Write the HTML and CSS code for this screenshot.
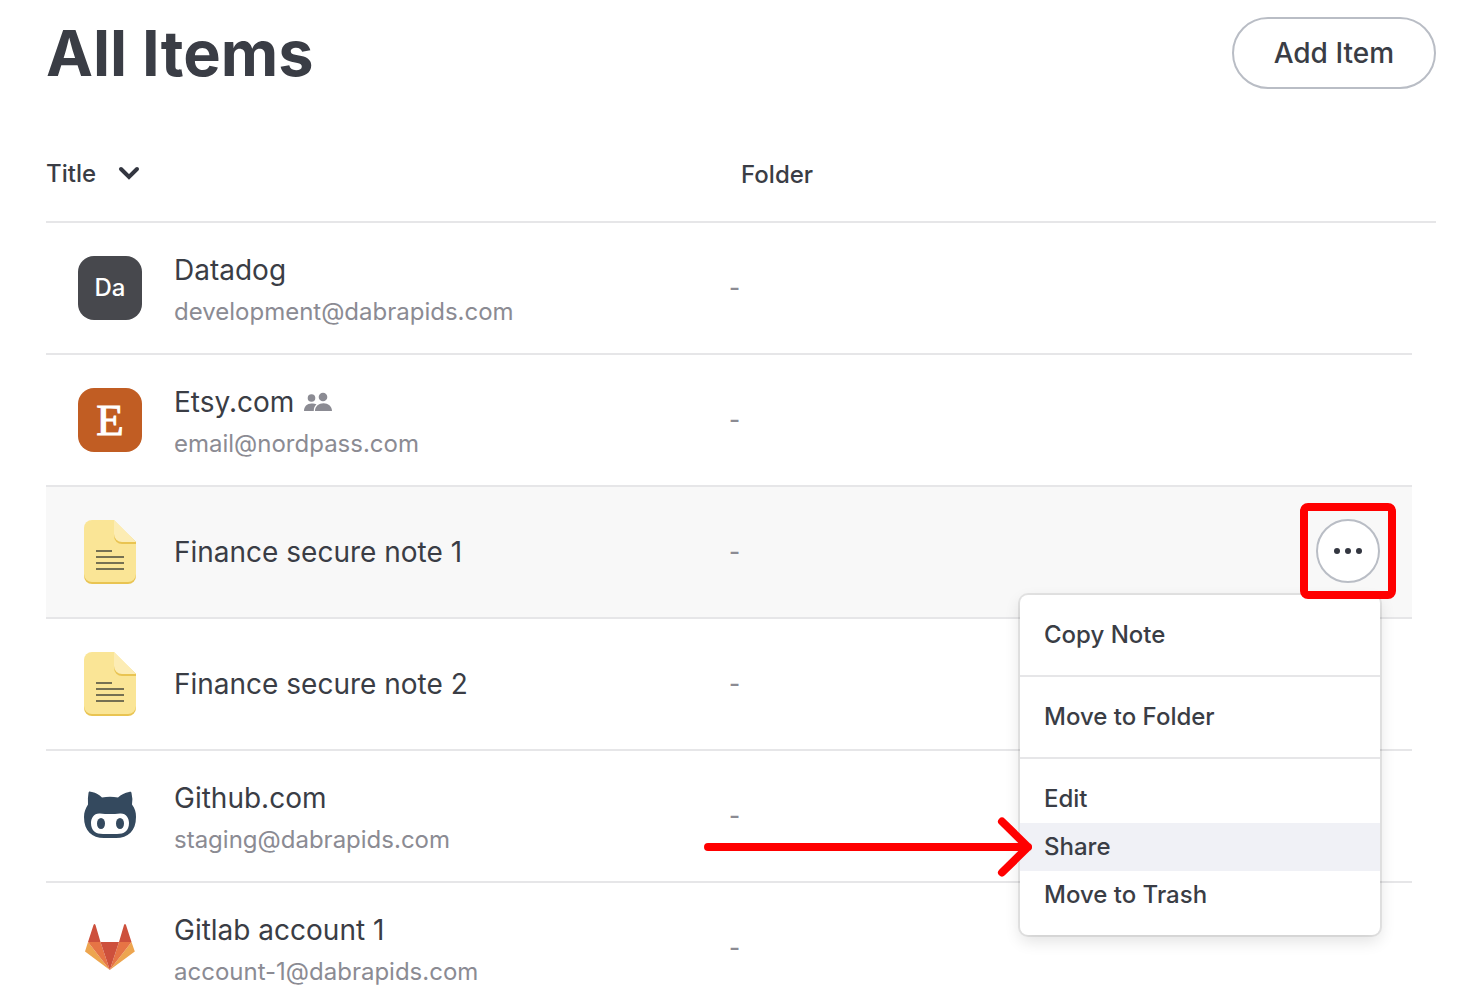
FILE: index.html
```html
<!DOCTYPE html>
<html lang="en">
<head>
<meta charset="utf-8">
<meta name="viewport" content="width=device-width, initial-scale=1">
<title>All Items</title>
<link rel="stylesheet" href="styles.css">
</head>
<body>
<svg class="sprite" aria-hidden="true">
  <symbol id="note" viewBox="0 0 64 64">
    <path fill="#e9c452" d="M14 2H36L58 24V56a8 8 0 0 1-8 8H14a8 8 0 0 1-8-8V10Z"/>
    <path fill="#fae596" d="M14 0H36L58 22V54a8 8 0 0 1-8 8H14a8 8 0 0 1-8-8V8A8 8 0 0 1 14 0Z"/>
    <path fill="#e9c452" d="M36 2V16a8 8 0 0 0 8 8H58V22Z"/>
    <path fill="#fcecb4" d="M36 0V14a8 8 0 0 0 8 8H58Z"/>
    <path fill="none" stroke="#757052" stroke-width="2" d="M18 31H34M18 37H46M18 43H46M18 49H46"/>
  </symbol>
</svg>
<main class="page">
  <header class="page-header">
    <h1 class="page-title">All Items</h1>
    <button class="add-button" type="button">Add Item</button>
  </header>
  <table class="items">
    <colgroup>
      <col class="col-title"><col class="col-folder"><col class="col-actions"><col class="col-gutter">
    </colgroup>
    <thead>
      <tr>
        <th scope="col"><button class="sort-button" type="button">Title
          <svg width="22" height="14" viewBox="0 0 22 14" aria-hidden="true"><path fill="none" stroke="#333640" stroke-width="4" stroke-linecap="round" d="M3 3L11 11L19 3"/></svg></button></th>
        <th class="folder-heading" scope="col">Folder</th>
        <td colspan="2"></td>
      </tr>
    </thead>
    <tbody>
      <tr>
        <td><div class="item">
          <span class="item-icon badge badge-dark">Da</span>
          <div><div class="item-name">Datadog</div><div class="item-user">development@dabrapids.com</div></div>
        </div></td>
        <td class="folder">-</td><td></td>
      </tr>
      <tr>
        <td><div class="item">
          <span class="item-icon badge badge-etsy">E</span>
          <div><div class="item-name">Etsy.com
            <svg width="28" height="20" viewBox="0 0 28 20" role="img" aria-label="Shared"><g fill="#8b8b93"><circle cx="7.500" cy="6" r="3.800"/><circle cx="19" cy="5" r="4.300"/><path d="M0 19c0-4.500 3-7.500 7.500-7.500 2 0 3.800.3 5 1-2 1.500-2.700 3.500-2.700 6.500ZM11 19c0-5 4-7.800 8.500-7.800S28 14 28 19Z"/></g></svg>
          </div><div class="item-user">email@nordpass.com</div></div>
        </div></td>
        <td class="folder">-</td><td></td>
      </tr>
      <tr class="is-active">
        <td><div class="item">
          <svg class="item-icon" aria-hidden="true"><use href="#note"/></svg>
          <div class="item-name">Finance secure note 1</div>
        </div></td>
        <td class="folder">-</td>
        <td><div class="actions">
          <button class="more-button" type="button" aria-label="More actions">
            <svg width="32" height="8" viewBox="0 0 32 8" aria-hidden="true"><g fill="#333640"><circle cx="5" cy="4" r="3"/><circle cx="16" cy="4" r="3"/><circle cx="27" cy="4" r="3"/></g></svg>
          </button>
          <div class="menu">
            <div class="menu-group"><button class="menu-item" type="button">Copy Note</button></div>
            <div class="menu-group"><button class="menu-item" type="button">Move to Folder</button></div>
            <div class="menu-group">
              <button class="menu-item" type="button">Edit</button>
              <button class="menu-item is-selected" type="button">Share
                <svg class="arrow" width="328" height="60" viewBox="0 0 328 60" aria-hidden="true"><path fill="none" stroke="#f00" stroke-width="8" stroke-linecap="round" stroke-linejoin="round" d="M4 30H324M298 4.500L324 30L298 55.500"/></svg>
              </button>
              <button class="menu-item" type="button">Move to Trash</button>
            </div>
          </div>
          <span class="marker"></span>
        </div></td>
      </tr>
      <tr>
        <td><div class="item">
          <svg class="item-icon" aria-hidden="true"><use href="#note"/></svg>
          <div class="item-name">Finance secure note 2</div>
        </div></td>
        <td class="folder">-</td><td></td>
      </tr>
      <tr>
        <td><div class="item">
          <svg class="item-icon" viewBox="0 0 64 64" aria-hidden="true">
            <path fill="#34495e" d="M10.500 9C11 6.500 12 7.600 14 8 18 8.800 21 10.800 24 13.500Q32 12 40 13.500C43 10.800 47 8.700 51 8 52.800 7.600 53.200 7.500 53.500 9Q55 15 54 20.500C57 24.500 58 28 58 33 58 47 50 54 38 54H26C14 54 6 47 6 33 6 28 7.500 24.500 10 20.500Q9.500 14 10.500 9Z"/>
            <path fill="#fff" d="M22 29.500Q32 30.500 42 29.500C48 29 51 34 51 39 51 47 46 50 39 50H25C18 50 13 47 13 39 13 34 16 29 22 29.500Z"/>
            <ellipse fill="#34495e" cx="23" cy="39.500" rx="4" ry="5.500"/><ellipse fill="#34495e" cx="42" cy="39.500" rx="4" ry="5.500"/>
          </svg>
          <div><div class="item-name">Github.com</div><div class="item-user">staging@dabrapids.com</div></div>
        </div></td>
        <td class="folder">-</td><td></td>
      </tr>
      <tr>
        <td><div class="item">
          <svg class="item-icon" viewBox="0 0 64 64" aria-hidden="true">
            <path fill="#eda54f" d="M10 26L7 35.500 31.800 54ZM53.500 26L56.800 35.500 31.800 54Z"/>
            <path fill="#e67445" d="M10 26H22.500L31.800 54ZM53.500 26H41L31.800 54Z"/>
            <path fill="#cd503c" d="M22.500 26H41L31.800 54ZM10 26L15.500 9Q16.500 7 17.500 9L22.500 26ZM53.500 26L48 9Q47 7 46 9L41 26Z"/>
          </svg>
          <div><div class="item-name">Gitlab account 1</div><div class="item-user">account-1@dabrapids.com</div></div>
        </div></td>
        <td class="folder">-</td><td></td>
      </tr>
    </tbody>
  </table>
</main>
</body>
</html>
```
FILE: styles.css
```css
* { box-sizing: border-box; }

body {
  margin: 0;
  height: 100vh;
  overflow: hidden;
  background: #fff;
  color: #3a3d45;
  font-family: Inter, "Liberation Sans", sans-serif;
  font-size: 24px;
}

button {
  font: inherit;
  color: inherit;
  background: none;
  border: 0;
  padding: 0;
}

.sprite { display: none; }

.page { padding: 17px 22px 0 46px; }

.page-header {
  display: flex;
  align-items: center;
  justify-content: space-between;
}

.page-title {
  margin: 0;
  font-size: 63px;
  line-height: 72px;
  font-weight: 700;
}

.add-button {
  height: 72px;
  padding: 0 40px;
  border: 2px solid #b9bdc5;
  border-radius: 36px;
  font-size: 28px;
  font-weight: 500;
}

.items {
  width: 100%;
  margin-top: 36px;
  border-collapse: separate;
  border-spacing: 0;
  table-layout: fixed;
}

.col-title { width: 49%; }
.col-actions { width: 120px; }
.col-gutter { width: 24px; }

.items th,
.items td {
  padding: 0;
  border-bottom: 2px solid #e6e6e8;
  text-align: left;
  vertical-align: middle;
}

.items th {
  height: 98px;
  font-weight: 500;
}

.items .folder-heading { padding: 2px 0 0 14px; }

.sort-button {
  display: flex;
  align-items: center;
  gap: 22px;
}

.items tbody td { height: 132px; }

.items .folder {
  padding: 0 0 2px 2px;
  color: #8b8b93;
  font-weight: 500;
}

.is-active { background: #f8f8f8; }

.item {
  display: flex;
  align-items: center;
  gap: 32px;
  padding-left: 32px;
}

.item-icon {
  flex: none;
  width: 64px;
  height: 64px;
}

.badge {
  display: flex;
  align-items: center;
  justify-content: center;
  border-radius: 16px;
  color: #fff;
}

.badge-dark {
  padding-bottom: 2px;
  background: #47484d;
  font-weight: 500;
}

.badge-etsy {
  background: #c15d23;
  font-family: "Liberation Serif", serif;
  font-size: 45px;
  -webkit-text-stroke: 1px #fff;
}

.item-name {
  display: flex;
  align-items: center;
  gap: 10px;
  font-size: 28px;
  line-height: 44px;
  font-weight: 400;
}

.item-user {
  margin-top: 4px;
  line-height: 32px;
  color: #8b8b93;
}

.actions {
  position: relative;
  width: 64px;
  margin: 0 32px 2px auto;
}

.more-button {
  display: flex;
  align-items: center;
  justify-content: center;
  width: 64px;
  height: 64px;
  border: 2px solid #b9bdc5;
  border-radius: 50%;
  background: #fff;
}

.marker {
  position: absolute;
  inset: -16px;
  border: 8px solid #f00;
  border-radius: 8px;
  pointer-events: none;
}

.menu {
  position: absolute;
  top: 76px;
  right: 0;
  width: 360px;
  border-radius: 8px;
  background: #fff;
  box-shadow: 0 0 0 2px rgba(0, 0, 0, .08), 0 6px 16px rgba(0, 0, 0, .12);
}

.menu-group { padding: 16px 0; }
.menu-group + .menu-group { border-top: 2px solid #e6e6e8; }

.menu-item {
  position: relative;
  display: block;
  width: 100%;
  height: 48px;
  padding: 0 24px 2px;
  font-weight: 500;
  text-align: left;
}

.is-selected { background: #f0f1f6; }

.arrow {
  position: absolute;
  top: -6px;
  left: -316px;
}
```
